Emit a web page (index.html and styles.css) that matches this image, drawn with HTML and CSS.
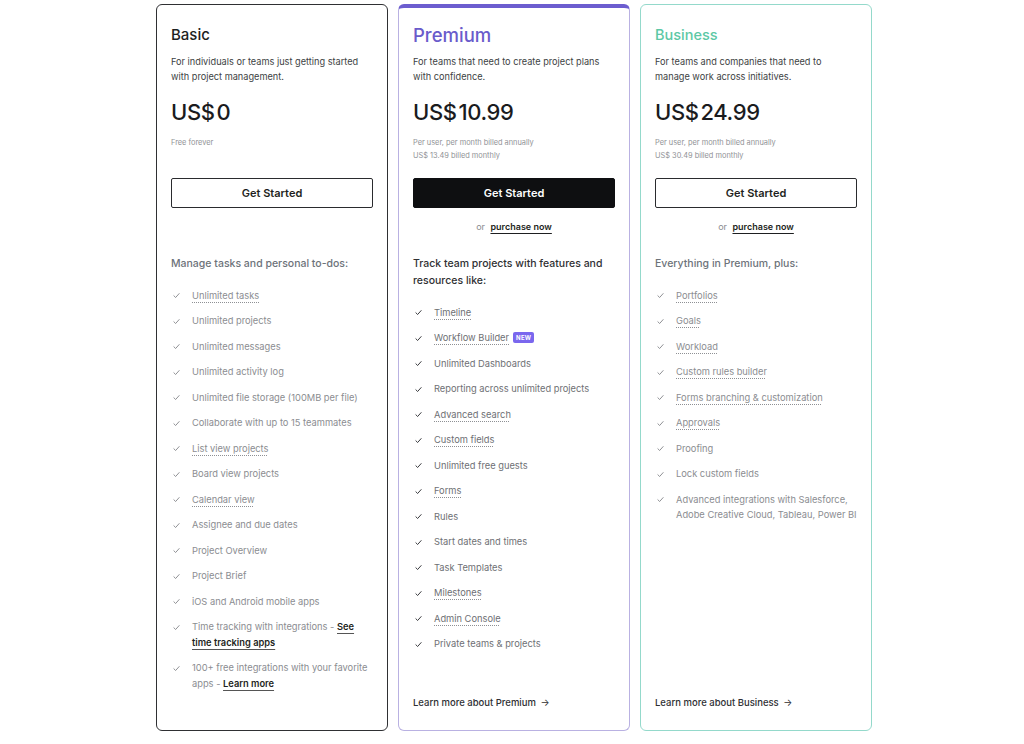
FILE: index.html
```html
<!DOCTYPE html>
<html lang="en">
<head>
<meta charset="utf-8">
<title>Pricing plans</title>
<link rel="stylesheet" href="styles.css">
</head>
<body>
<div class="plans">
  <section class="card basic">
    <h2 class="title">Basic</h2>
    <p class="desc">For individuals or teams just getting started<br>with project management.</p>
    <div class="price"><span class="cur">US$</span>0</div>
    <div class="note">Free forever</div>
    <a class="btn" href="#">Get Started</a>
    <div class="alt"></div>
    <h3 class="feat-head">Manage tasks and personal to-dos:</h3>
    <ul class="feats">
      <li><span class="check"><svg viewBox="0 0 8 8"><path d="M1 4.3 L3 6.3 L7 1.8"/></svg></span><span><span class="dotted">Unlimited tasks</span></span></li>
      <li><span class="check"><svg viewBox="0 0 8 8"><path d="M1 4.3 L3 6.3 L7 1.8"/></svg></span><span>Unlimited projects</span></li>
      <li><span class="check"><svg viewBox="0 0 8 8"><path d="M1 4.3 L3 6.3 L7 1.8"/></svg></span><span>Unlimited messages</span></li>
      <li><span class="check"><svg viewBox="0 0 8 8"><path d="M1 4.3 L3 6.3 L7 1.8"/></svg></span><span>Unlimited activity log</span></li>
      <li><span class="check"><svg viewBox="0 0 8 8"><path d="M1 4.3 L3 6.3 L7 1.8"/></svg></span><span>Unlimited file storage (100MB per file)</span></li>
      <li><span class="check"><svg viewBox="0 0 8 8"><path d="M1 4.3 L3 6.3 L7 1.8"/></svg></span><span>Collaborate with up to 15 teammates</span></li>
      <li><span class="check"><svg viewBox="0 0 8 8"><path d="M1 4.3 L3 6.3 L7 1.8"/></svg></span><span><span class="dotted">List view projects</span></span></li>
      <li><span class="check"><svg viewBox="0 0 8 8"><path d="M1 4.3 L3 6.3 L7 1.8"/></svg></span><span>Board view projects</span></li>
      <li><span class="check"><svg viewBox="0 0 8 8"><path d="M1 4.3 L3 6.3 L7 1.8"/></svg></span><span><span class="dotted">Calendar view</span></span></li>
      <li><span class="check"><svg viewBox="0 0 8 8"><path d="M1 4.3 L3 6.3 L7 1.8"/></svg></span><span>Assignee and due dates</span></li>
      <li><span class="check"><svg viewBox="0 0 8 8"><path d="M1 4.3 L3 6.3 L7 1.8"/></svg></span><span>Project Overview</span></li>
      <li><span class="check"><svg viewBox="0 0 8 8"><path d="M1 4.3 L3 6.3 L7 1.8"/></svg></span><span>Project Brief</span></li>
      <li><span class="check"><svg viewBox="0 0 8 8"><path d="M1 4.3 L3 6.3 L7 1.8"/></svg></span><span>iOS and Android mobile apps</span></li>
      <li><span class="check"><svg viewBox="0 0 8 8"><path d="M1 4.3 L3 6.3 L7 1.8"/></svg></span><span>Time tracking with integrations - <a class="strong" href="#">See<br>time tracking apps</a></span></li>
      <li><span class="check"><svg viewBox="0 0 8 8"><path d="M1 4.3 L3 6.3 L7 1.8"/></svg></span><span>100+ free integrations with your favorite<br>apps - <a class="strong" href="#">Learn more</a></span></li>
    </ul>
  </section>

  <section class="card premium">
    <h2 class="title">Premium</h2>
    <p class="desc">For teams that need to create project plans<br>with confidence.</p>
    <div class="price"><span class="cur">US$</span>10.99</div>
    <div class="note">Per user, per month billed annually<br>US$ 13.49 billed monthly</div>
    <a class="btn dark" href="#">Get Started</a>
    <div class="alt">or <a href="#">purchase now</a></div>
    <h3 class="feat-head">Track team projects with features and<br>resources like:</h3>
    <ul class="feats">
      <li><span class="check"><svg viewBox="0 0 8 8"><path d="M1 4.3 L3 6.3 L7 1.8"/></svg></span><span><span class="dotted">Timeline</span></span></li>
      <li><span class="check"><svg viewBox="0 0 8 8"><path d="M1 4.3 L3 6.3 L7 1.8"/></svg></span><span><span class="dotted">Workflow Builder</span><span class="badge">NEW</span></span></li>
      <li><span class="check"><svg viewBox="0 0 8 8"><path d="M1 4.3 L3 6.3 L7 1.8"/></svg></span><span>Unlimited Dashboards</span></li>
      <li><span class="check"><svg viewBox="0 0 8 8"><path d="M1 4.3 L3 6.3 L7 1.8"/></svg></span><span>Reporting across unlimited projects</span></li>
      <li><span class="check"><svg viewBox="0 0 8 8"><path d="M1 4.3 L3 6.3 L7 1.8"/></svg></span><span><span class="dotted">Advanced search</span></span></li>
      <li><span class="check"><svg viewBox="0 0 8 8"><path d="M1 4.3 L3 6.3 L7 1.8"/></svg></span><span><span class="dotted">Custom fields</span></span></li>
      <li><span class="check"><svg viewBox="0 0 8 8"><path d="M1 4.3 L3 6.3 L7 1.8"/></svg></span><span>Unlimited free guests</span></li>
      <li><span class="check"><svg viewBox="0 0 8 8"><path d="M1 4.3 L3 6.3 L7 1.8"/></svg></span><span><span class="dotted">Forms</span></span></li>
      <li><span class="check"><svg viewBox="0 0 8 8"><path d="M1 4.3 L3 6.3 L7 1.8"/></svg></span><span>Rules</span></li>
      <li><span class="check"><svg viewBox="0 0 8 8"><path d="M1 4.3 L3 6.3 L7 1.8"/></svg></span><span>Start dates and times</span></li>
      <li><span class="check"><svg viewBox="0 0 8 8"><path d="M1 4.3 L3 6.3 L7 1.8"/></svg></span><span>Task Templates</span></li>
      <li><span class="check"><svg viewBox="0 0 8 8"><path d="M1 4.3 L3 6.3 L7 1.8"/></svg></span><span><span class="dotted">Milestones</span></span></li>
      <li><span class="check"><svg viewBox="0 0 8 8"><path d="M1 4.3 L3 6.3 L7 1.8"/></svg></span><span><span class="dotted">Admin Console</span></span></li>
      <li><span class="check"><svg viewBox="0 0 8 8"><path d="M1 4.3 L3 6.3 L7 1.8"/></svg></span><span>Private teams &amp; projects</span></li>
    </ul>
    <a class="more" href="#">Learn more about Premium <span class="arrow">&rarr;</span></a>
  </section>

  <section class="card business">
    <h2 class="title">Business</h2>
    <p class="desc">For teams and companies that need to<br>manage work across initiatives.</p>
    <div class="price"><span class="cur">US$</span>24.99</div>
    <div class="note">Per user, per month billed annually<br>US$ 30.49 billed monthly</div>
    <a class="btn" href="#">Get Started</a>
    <div class="alt">or <a href="#">purchase now</a></div>
    <h3 class="feat-head">Everything in Premium, plus:</h3>
    <ul class="feats">
      <li><span class="check"><svg viewBox="0 0 8 8"><path d="M1 4.3 L3 6.3 L7 1.8"/></svg></span><span><span class="dotted">Portfolios</span></span></li>
      <li><span class="check"><svg viewBox="0 0 8 8"><path d="M1 4.3 L3 6.3 L7 1.8"/></svg></span><span><span class="dotted">Goals</span></span></li>
      <li><span class="check"><svg viewBox="0 0 8 8"><path d="M1 4.3 L3 6.3 L7 1.8"/></svg></span><span><span class="dotted">Workload</span></span></li>
      <li><span class="check"><svg viewBox="0 0 8 8"><path d="M1 4.3 L3 6.3 L7 1.8"/></svg></span><span><span class="dotted">Custom rules builder</span></span></li>
      <li><span class="check"><svg viewBox="0 0 8 8"><path d="M1 4.3 L3 6.3 L7 1.8"/></svg></span><span><span class="dotted">Forms branching &amp; customization</span></span></li>
      <li><span class="check"><svg viewBox="0 0 8 8"><path d="M1 4.3 L3 6.3 L7 1.8"/></svg></span><span><span class="dotted">Approvals</span></span></li>
      <li><span class="check"><svg viewBox="0 0 8 8"><path d="M1 4.3 L3 6.3 L7 1.8"/></svg></span><span>Proofing</span></li>
      <li><span class="check"><svg viewBox="0 0 8 8"><path d="M1 4.3 L3 6.3 L7 1.8"/></svg></span><span>Lock custom fields</span></li>
      <li><span class="check"><svg viewBox="0 0 8 8"><path d="M1 4.3 L3 6.3 L7 1.8"/></svg></span><span class="nowrap">Advanced integrations with Salesforce,<br>Adobe Creative Cloud, Tableau, Power BI</span></li>
    </ul>
    <a class="more" href="#">Learn more about Business <span class="arrow">&rarr;</span></a>
  </section>
</div>
</body>
</html>
```

FILE: styles.css
```css
html, body {
  margin: 0;
  background: #ffffff;
}

body {
  font-family: Inter, "Noto Sans", sans-serif;
  color: #1e1f21;
}

.plans {
  display: flex;
  align-items: stretch;
  gap: 10px;
  padding: 4px 0 0 156px;
}

.card {
  box-sizing: border-box;
  width: 232px;
  min-height: 727px;
  border: 1px solid #2f3033;
  border-radius: 6px;
  padding: 18px 14px 20px;
  display: flex;
  flex-direction: column;
}

.card.premium {
  border-color: #b9b1e2;
  border-top: 4px solid #6c5dcf;
  padding-top: 15px;
}

.card.business {
  border-color: #94d9cb;
}

.title {
  margin: 0;
  font-size: 15px;
  line-height: 24px;
  font-weight: 500;
  color: #1e1f21;
}

.premium .title {
  font-size: 18.5px;
  color: #6a5bcb;
}

.business .title {
  font-size: 14.5px;
  color: #5cc8a5;
}

.desc {
  margin: 7px 0 0;
  font-size: 9.2px;
  line-height: 15px;
  color: #3d3f43;
}

.price {
  margin-top: 13px;
  font-size: 22px;
  line-height: 30px;
  font-weight: 500;
  color: #1a1b1e;
  letter-spacing: -0.4px;
}

.cur {
  margin-right: 2px;
}

.note {
  margin-top: 9px;
  min-height: 26px;
  font-size: 7.4px;
  line-height: 13px;
  color: #909296;
}

.btn {
  display: block;
  margin-top: 16px;
  height: 30px;
  box-sizing: border-box;
  border: 1px solid #2a2b2e;
  border-radius: 2px;
  text-align: center;
  line-height: 29px;
  font-size: 11px;
  font-weight: 600;
  color: #1e1f21;
  text-decoration: none;
}

.btn.dark {
  background: #0e0f11;
  border-color: #0e0f11;
  color: #ffffff;
}

.alt {
  margin-top: 12px;
  height: 14px;
  line-height: 14px;
  text-align: center;
  font-size: 9px;
  color: #8a8c90;
}

.alt a {
  margin-left: 3px;
  color: #1e1f21;
  font-weight: 600;
  text-decoration: underline;
  text-decoration-thickness: 1px;
  text-underline-offset: 3px;
}

.feat-head {
  margin: 21px 0 0;
  font-size: 10.5px;
  line-height: 17px;
  font-weight: 500;
  color: #6d737a;
}

.premium .feat-head {
  color: #2f3033;
}

.feats {
  list-style: none;
  margin: 15.5px 0 0;
  padding: 0;
  display: flex;
  flex-direction: column;
  gap: 10px;
}

.feats li {
  display: flex;
  font-size: 9.3px;
  line-height: 15.5px;
  color: #8b8d91;
}

.premium .feats li {
  color: #6e7074;
}

.check {
  flex: none;
  width: 21px;
  color: #8b8d91;
}

.premium .check {
  color: #333438;
}

.check svg {
  display: block;
  width: 7px;
  height: 7px;
  margin: 4.5px 0 0 1.5px;
  fill: none;
  stroke: currentColor;
  stroke-width: 1.1;
  stroke-linecap: round;
  stroke-linejoin: round;
}

.dotted {
  text-decoration: underline dotted #8e9094;
  text-underline-offset: 3px;
}

.strong {
  color: #1e1f21;
  font-weight: 600;
  text-decoration: underline;
  text-decoration-color: #555;
  text-underline-offset: 3px;
}

.nowrap {
  white-space: nowrap;
}

.badge {
  display: inline-block;
  margin-left: 4px;
  padding: 0 3px;
  height: 11px;
  line-height: 11px;
  vertical-align: 1px;
  border-radius: 2px;
  background: #7a67ee;
  color: #ffffff;
  font-size: 6px;
  font-weight: 700;
  letter-spacing: 0.3px;
}

.more {
  margin-top: auto;
  font-size: 9.5px;
  line-height: 14px;
  font-weight: 500;
  color: #2f3033;
  text-decoration: none;
}

.arrow {
  margin-left: 2px;
  font-weight: 400;
}
```
